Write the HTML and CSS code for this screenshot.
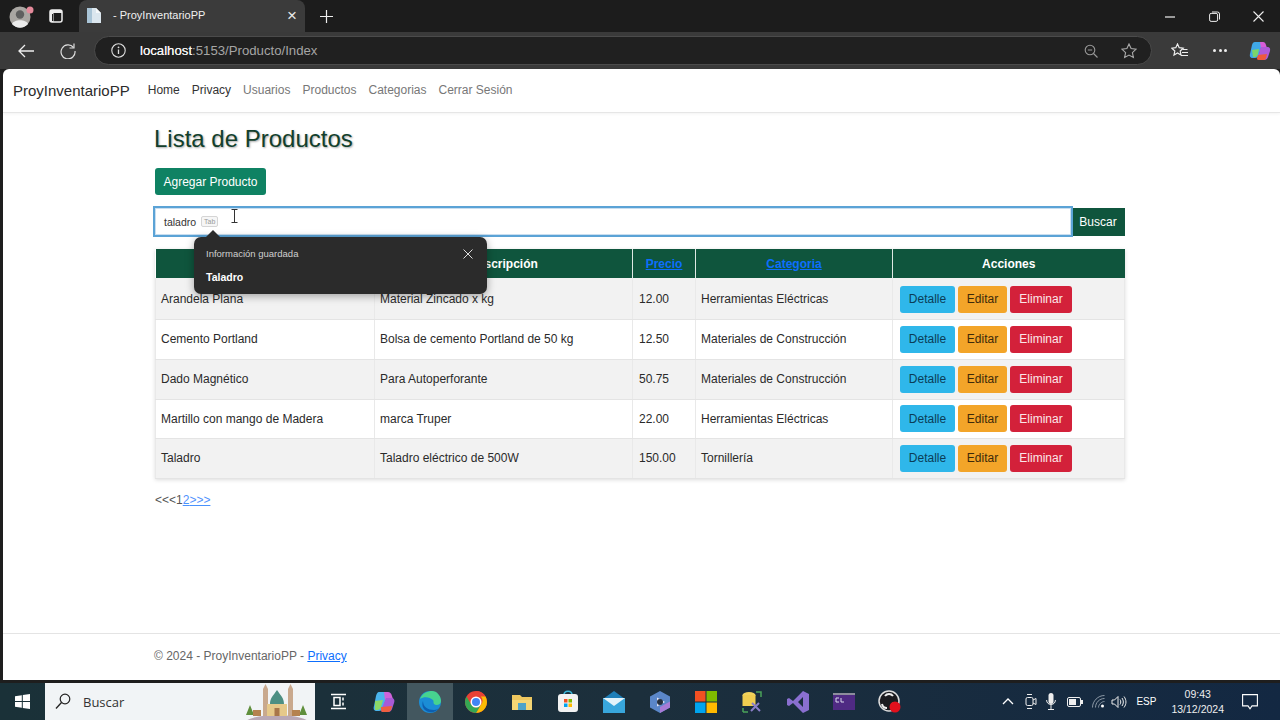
FILE: index.html
```html
<!DOCTYPE html>
<html lang="es">
<head>
<meta charset="utf-8">
<title>- ProyInventarioPP</title>
<link rel="stylesheet" href="styles.css">
</head>
<body>
<header class="tabbar">
  <div class="avatar">
    <svg width="26" height="26" viewBox="0 0 26 26"><circle cx="11" cy="14" r="10.5" fill="#a9a6a2"/><circle cx="11" cy="11.5" r="4.2" fill="#5f5f5f"/><path d="M3 21c2-5 14-5 16 0a10.500 10.500 0 0 1-16 0z" fill="#ececec"/><circle cx="21" cy="7" r="3.500" fill="#e58a9b"/></svg>
  </div>
  <svg class="tabs-icon" width="14" height="14" viewBox="0 0 14 14"><rect x="1" y="1" width="12" height="12" rx="2" fill="none" stroke="#eee" stroke-width="1.500"/><rect x="1" y="1" width="12" height="3" fill="#eee"/><rect x="1" y="1" width="3.500" height="12" fill="#eee"/><rect x="3" y="5" width="1" height="7" fill="#222"/></svg>
  <div class="tab">
    <svg width="16" height="17" viewBox="0 0 16 17"><path d="M1 1h9l5 5v10H1z" fill="#dbe6ee"/><path d="M1 1h5v15H1z" fill="#a9c4d6"/><path d="M10 1l5 5h-5z" fill="#f5f8fa"/></svg>
    <span class="tab-title">- ProyInventarioPP</span>
    <span class="tab-close">×</span>
  </div>
  <svg class="plus" width="13" height="13" viewBox="0 0 13 13"><path d="M6.500 0v13M0 6.500h13" stroke="#eee" stroke-width="1.200"/></svg>
  <div class="winctl">
    <svg width="11" height="11" viewBox="0 0 11 11"><path d="M0 6h10" stroke="#eee" stroke-width="1.200"/></svg>
    <svg width="11" height="11" viewBox="0 0 11 11"><rect x=".6" y="2.400" width="8" height="8" rx="1.500" fill="none" stroke="#eee"/><path d="M3 1h5.500a2 2 0 0 1 2 2v5.500" fill="none" stroke="#eee"/></svg>
    <svg width="11" height="11" viewBox="0 0 11 11"><path d="M.5.5l10 10M10.500.5l-10 10" stroke="#eee" stroke-width="1.100"/></svg>
  </div>
</header>

<nav class="toolbar">
  <svg class="tool-back" width="16" height="14" viewBox="0 0 16 14"><path d="M7 1L1 7l6 6M1 7h15" fill="none" stroke="#eee" stroke-width="1.300"/></svg>
  <svg class="tool-reload" width="16" height="16" viewBox="0 0 16 16"><path d="M13.500 4.500A7 7 0 1 0 15 8" fill="none" stroke="#ddd" stroke-width="1.200"/><path d="M14 0.500v4.500H9.500" fill="none" stroke="#ddd" stroke-width="1.200"/></svg>
  <div class="addressbar">
    <svg width="15" height="15" viewBox="0 0 15 15"><circle cx="7.500" cy="7.500" r="6.700" fill="none" stroke="#ddd" stroke-width="1.100"/><path d="M7.500 6.500v4.500" stroke="#ddd" stroke-width="1.300"/><circle cx="7.500" cy="4.300" r=".9" fill="#ddd"/></svg>
    <span class="url"><b>localhost</b>:5153/Producto/Index</span>
    <svg class="zoom-icon" width="14" height="14" viewBox="0 0 14 14"><circle cx="6" cy="6" r="4.800" fill="none" stroke="#999" stroke-width="1.100"/><path d="M3.800 6h4.400M9.500 9.500l4 4" stroke="#999" stroke-width="1.100"/></svg>
    <svg class="star-icon" width="16" height="16" viewBox="0 0 16 16"><path d="M8 1l2.100 4.600 5 .6-3.700 3.400 1 4.900L8 12.100l-4.400 2.400 1-4.900L.9 6.200l5-.6z" fill="none" stroke="#aaa" stroke-width="1.100"/></svg>
  </div>
  <svg class="favs" width="17" height="15" viewBox="0 0 17 15"><path d="M6.500 1l1.700 3.700 4 .5-3 2.800.8 4L6.500 10 3 12l.8-4-3-2.800 4-.5z" fill="none" stroke="#eee" stroke-width="1.200"/><path d="M11.500 6.500h5M11 9.500h6M10 12.500h7" stroke="#eee" stroke-width="1.100"/></svg>
  <span class="dots"><i></i><i></i><i></i></span>
  <svg class="copilot" width="22" height="22" viewBox="0 0 22 22"><path d="M6 2h5c2 0 2 2 1.500 4L10 15c-.5 2-2 3-4 3H4c-3 0-3.500-2-3-4L3 5c.5-2 1.500-3 3-3z" fill="#3fa9e8"/><path d="M11 2h3c1.500 0 2.500 1 3 3l1 3-6 1z" fill="#d85cd8"/><path d="M12 7h6c3 0 3.500 2 3 4l-2 6c-.6 2-2 3-4 3h-4c-2 0-2.500-1.500-2-3l1.500-5c.4-2 1-5 1.500-5z" fill="#b05ad9"/><path d="M9 15l9-1-1 4c-.5 1.500-1.500 2-3 2h-4c-2 0-2-1-2-2z" fill="#ee5a3c"/><path d="M3 10l7-1-1 5c-.4 2-2 3-3 3H4z" fill="#7bd56b"/></svg>
</nav>

<main class="page">
  <div class="navbar">
    <a class="brand">ProyInventarioPP</a>
    <a class="nav-dark">Home</a>
    <a class="nav-dark">Privacy</a>
    <a class="nav-grey">Usuarios</a>
    <a class="nav-grey">Productos</a>
    <a class="nav-grey">Categorias</a>
    <a class="nav-grey">Cerrar Sesión</a>
  </div>

  <section class="content">
    <h1 class="title">Lista de Productos</h1>
    <a class="btn add">Agregar Producto</a>
    <form class="search">
      <div class="search-input">
        <span class="typed">taladro</span><span class="tabkey">Tab</span>
        <svg class="ibeam" width="7" height="14" viewBox="0 0 7 14"><path d="M.5.500h6M.5 13.500h6M3.500.5v13" stroke="#333" fill="none"/></svg>
      </div>
      <button class="search-btn" type="button">Buscar</button>
    </form>

    <div class="table-wrap">
      <table class="products">
        <colgroup>
          <col class="c1"><col class="c2"><col class="c3"><col class="c4"><col class="c5">
        </colgroup>
        <thead>
          <tr><th></th><th>Descripción</th><th><a>Precio</a></th><th><a>Categoria</a></th><th>Acciones</th></tr>
        </thead>
        <tbody>
          <tr><td>Arandela Plana</td><td>Material Zincado x kg</td><td>12.00</td><td>Herramientas Eléctricas</td><td><div class="acts"><a class="btn info">Detalle</a><a class="btn warn">Editar</a><a class="btn danger">Eliminar</a></div></td></tr>
          <tr><td>Cemento Portland</td><td>Bolsa de cemento Portland de 50 kg</td><td>12.50</td><td>Materiales de Construcción</td><td><div class="acts"><a class="btn info">Detalle</a><a class="btn warn">Editar</a><a class="btn danger">Eliminar</a></div></td></tr>
          <tr><td>Dado Magnético</td><td>Para Autoperforante</td><td>50.75</td><td>Materiales de Construcción</td><td><div class="acts"><a class="btn info">Detalle</a><a class="btn warn">Editar</a><a class="btn danger">Eliminar</a></div></td></tr>
          <tr><td>Martillo con mango de Madera</td><td>marca Truper</td><td>22.00</td><td>Herramientas Eléctricas</td><td><div class="acts"><a class="btn info">Detalle</a><a class="btn warn">Editar</a><a class="btn danger">Eliminar</a></div></td></tr>
          <tr><td>Taladro</td><td>Taladro eléctrico de 500W</td><td>150.00</td><td>Tornillería</td><td><div class="acts"><a class="btn info">Detalle</a><a class="btn warn">Editar</a><a class="btn danger">Eliminar</a></div></td></tr>
        </tbody>
      </table>
      <aside class="popover">
        <span class="pop-arrow"></span>
        <div class="pop-head"><span>Información guardada</span>
          <svg width="10" height="10" viewBox="0 0 10 10"><path d="M.5.500l9 9M9.500.500l-9 9" stroke="#ddd"/></svg>
        </div>
        <div class="pop-item">Taladro</div>
      </aside>
    </div>

    <p class="pager">&lt;&lt;&lt;1<a>2</a><a>&gt;&gt;&gt;</a></p>
  </section>

  <footer class="foot">© 2024 - ProyInventarioPP - <a>Privacy</a></footer>
</main>

<footer class="taskbar">
  <svg class="win" width="15" height="15" viewBox="0 0 15 15"><path d="M0 2.200l6.800-1V7H0zM7.800 1l7.200-1v7H7.800zM0 8h6.800v5.800l-6.800-1zM7.800 8H15v7l-7.200-1z" fill="#fff"/></svg>
  <div class="tsearch">
    <svg width="16" height="17" viewBox="0 0 16 17"><circle cx="10" cy="6" r="4.800" fill="none" stroke="#222" stroke-width="1.200"/><path d="M6.500 9.500L1 15.500" stroke="#222" stroke-width="1.300"/></svg>
    <span>Buscar</span>
    <svg class="mosque" width="70" height="37" viewBox="0 0 70 37"><ellipse cx="33" cy="41" rx="33" ry="9" fill="#b9a8b5"/><path d="M19 33V6l2.500-5L24 6v27z" fill="#c9a98e"/><path d="M44 33V6l2.500-5L49 6v27z" fill="#c9a98e"/><rect x="23" y="21" width="20" height="12" fill="#e6c98a"/><path d="M26 21c0-6 3-8 7-14 4 6 7 8 7 14z" fill="#4d8f83"/><rect x="30.500" y="25" width="5" height="8" fill="#a8764a"/><path d="M2 32l4-10 4 10z" fill="#5f8f3c"/><path d="M55 32l4-10 4 10z" fill="#5f8f3c"/><rect x="9" y="27" width="8" height="6" fill="#b5824f"/><rect x="48" y="27" width="8" height="6" fill="#b5824f"/></svg>
  </div>
  <div class="apps">
    <span class="app"><svg width="17" height="17" viewBox="0 0 17 17"><path d="M1 1.500h15M1 15.500h15M4 4.500h6v8H4zM13 4.500v3M13 9.500v3" fill="none" stroke="#fff" stroke-width="1.500"/></svg></span>
    <span class="app"><svg width="24" height="24" viewBox="0 0 24 24"><path d="M7 2h6c2 0 3 2 2 4l-4 12c-.7 2-2 3-4 3H5c-3 0-4-2-3-5L4 6c.5-2 1.500-4 3-4z" fill="#4ab4ec"/><path d="M12 2h4c2 0 3 1 4 4l1 3-8 1z" fill="#cf62d9"/><path d="M14 8h5c3 0 4 2 3 5l-2 6c-.7 2-2 3-4 3h-5c-2 0-2-2-1.500-3z" fill="#a85ad6"/><path d="M9 17l11-1-1 4c-.5 1-2 2-3 2h-5c-2 0-2-2-2-3z" fill="#ef5f3f"/><path d="M3 11l8-1-2 7c-.5 2-2 3-4 3H3z" fill="#8cd867"/></svg></span>
    <span class="app active"><svg width="24" height="24" viewBox="0 0 24 24"><circle cx="12" cy="12" r="11" fill="#1b8dd6"/><path d="M2 9C4 3 10 1 14 1c5 0 9 5 9 10 0 4-5 5-7 3-1-1 0-3-1-4-3-3-9-4-13-1z" fill="#47d38f"/><path d="M11 22c-5-1-8-6-6-11 0 6 5 9 11 9 2 0 4-1 5-2-2 3-6 5-10 4z" fill="#0d5fb0"/></svg></span>
    <span class="app"><svg width="24" height="24" viewBox="0 0 24 24"><circle cx="12" cy="12" r="11" fill="#e94235"/><path d="M12 1a11 11 0 0 1 9.500 5.500H12z" fill="#e94235"/><path d="M21.500 6.500A11 11 0 0 1 12 23l5-8.500a5.500 5.500 0 0 0-.3-8z" fill="#fbbc04"/><path d="M2.500 6.500L7.500 15a5.500 5.500 0 0 0 9.500-.5l-5 8.500A11 11 0 0 1 2.500 6.500z" fill="#34a853"/><circle cx="12" cy="12" r="5.500" fill="#fff"/><circle cx="12" cy="12" r="4" fill="#4285f4"/></svg></span>
    <span class="app"><svg width="22" height="18" viewBox="0 0 22 18"><path d="M1 2h8l2 2h10v13H1z" fill="#edc75f"/><path d="M1 7h20v10H1z" fill="#f4d675"/><rect x="7" y="10" width="8" height="7" fill="#4ea3c9"/></svg></span>
    <span class="app"><svg width="22" height="23" viewBox="0 0 22 23"><path d="M7 5c0-5 8-5 8 0" fill="none" stroke="#3bb6d8" stroke-width="1.500"/><rect x="1" y="4" width="20" height="18" rx="3" fill="#f2f2f2"/><rect x="7" y="9" width="3.500" height="3.500" fill="#f25022"/><rect x="11.500" y="9" width="3.500" height="3.500" fill="#7fba00"/><rect x="7" y="13.500" width="3.500" height="3.500" fill="#00a4ef"/><rect x="11.500" y="13.500" width="3.500" height="3.500" fill="#ffb900"/></svg></span>
    <span class="app"><svg width="24" height="22" viewBox="0 0 24 22"><path d="M12 0l11 8H1z" fill="#1f7fb8"/><rect x="1" y="7" width="22" height="15" fill="#38a6dc"/><path d="M1 7l11 8 11-8z" fill="#e4f3fa"/></svg></span>
    <span class="app"><svg width="22" height="22" viewBox="0 0 22 22"><path d="M11 0l10 5.500v11L11 22 1 16.500v-11z" fill="#5b87c9"/><path d="M11 22l10-5.500v-6L11 16z" fill="#a87bd6"/><path d="M8 6.500l8 4.500-8 4.500z" fill="#e6e6f5"/><circle cx="11" cy="11" r="3" fill="#26303e"/></svg></span>
    <span class="app"><svg width="22" height="22" viewBox="0 0 22 22"><rect width="10.500" height="10.500" fill="#f25022"/><rect x="11.500" width="10.500" height="10.500" fill="#7fba00"/><rect y="11.500" width="10.500" height="10.500" fill="#00a4ef"/><rect x="11.500" y="11.500" width="10.500" height="10.500" fill="#ffb900"/></svg></span>
    <span class="app"><svg width="22" height="22" viewBox="0 0 22 22"><ellipse cx="8" cy="4" rx="6.500" ry="3" fill="#f2d25c"/><rect x="1.500" y="4" width="13" height="11" fill="#f0cd50"/><path d="M15 1h5v5M2 21v-4M2 21h5" fill="none" stroke="#4ba35a" stroke-width="1.500"/><path d="M10 20l8-8M11 12l8 8" stroke="#8a7fc9" stroke-width="2"/></svg></span>
    <span class="app"><svg width="24" height="24" viewBox="0 0 24 24"><path d="M17 1l6 3v16l-6 3L7 13l-4 3-2-1V9l2-1 4 3zm0 6l-5 5 5 5z" fill="#8a6fd0"/></svg></span>
    <span class="app"><svg width="22" height="17" viewBox="0 0 22 17"><rect width="22" height="17" fill="#4f2a83"/><rect width="22" height="2" fill="#8d8d9c"/><path d="M3 5h3M3 5v4h3M8 5v4h3" stroke="#d8d8ea" fill="none"/></svg></span>
    <span class="app"><svg width="24" height="24" viewBox="0 0 24 24"><circle cx="11" cy="11" r="10" fill="#1b1b1f" stroke="#ddd" stroke-width="1.500"/><path d="M7 6a5 5 0 0 1 8 0M4 14a5 5 0 0 0 5 4M13 17l2-4" stroke="#eee" stroke-width="2" fill="none"/><circle cx="17" cy="17" r="5.500" fill="#e3101c"/></svg></span>
  </div>
  <div class="tray">
    <svg class="chev" width="12" height="7" viewBox="0 0 12 7"><path d="M1 6l5-5 5 5" fill="none" stroke="#fff" stroke-width="1.300"/></svg>
    <svg class="cam" width="12" height="17" viewBox="0 0 12 17"><rect x="1" y="4.500" width="7" height="8" rx="1.500" fill="none" stroke="#eee"/><path d="M8 7l3-1.500v6L8 10M2 1.500h5M2 15.500h5" fill="none" stroke="#eee"/></svg>
    <svg class="mic" width="10" height="17" viewBox="0 0 10 17"><rect x="2.500" y="0" width="5" height="11" rx="2.500" fill="#eee"/><path d="M.6 7c0 6 8.800 6 8.800 0M5 12v4M2 16.500h6" stroke="#eee" fill="none"/></svg>
    <svg class="bat" width="16" height="10" viewBox="0 0 16 10"><rect x=".5" y=".5" width="13" height="9" rx="1.500" fill="none" stroke="#eee"/><rect x="2" y="2" width="7" height="6" fill="#eee"/><rect x="14" y="3" width="2" height="4" fill="#eee"/></svg>
    <svg width="13" height="13" viewBox="0 0 13 13"><path d="M.5 12.500C.5 6 6 .5 12.500.5M3.500 12.500c0-5 4-9 9-9M6.500 12.500c0-3 3-6 6-6" fill="none" stroke="#8b98a5"/><circle cx="10.500" cy="11" r="1.500" fill="#fff"/></svg>
    <svg class="vol" width="16" height="14" viewBox="0 0 16 14"><path d="M1 5h2.500L7 1.500v11L3.500 9H1z" fill="none" stroke="#eee"/><path d="M9 4.500c1 1.500 1 3.500 0 5M11 3c1.800 2.500 1.800 5.500 0 8M13 1.500c2.600 3.500 2.600 7.500 0 11" fill="none" stroke="#eee"/></svg>
    <span class="lang">ESP</span>
    <div class="clock"><span>09:43</span><span>13/12/2024</span></div>
    <svg class="notif" width="16" height="16" viewBox="0 0 16 16"><path d="M.6.600h14.800v11.300H10L8 14.800 6 11.900H.6z" fill="none" stroke="#fff" stroke-width="1.100"/></svg>
  </div>
</footer>
</body>
</html>
```

FILE: styles.css
```css
* { box-sizing: border-box; }
html, body { margin: 0; height: 720px; overflow: hidden; }
body {
  display: flex;
  flex-direction: column;
  background: #1e1e1e;
  font-family: "Liberation Sans", Arial, sans-serif;
  font-size: 12px;
  color: #212529;
}

/* Browser tab strip */
.tabbar {
  flex: 0 0 32px;
  display: flex;
  align-items: center;
  background: #1c1c1c;
}
.avatar { margin: 0 0 0 9px; width: 26px; height: 26px; }
.tabs-icon { margin-left: 14px; }
.tab {
  margin: 0 0 0 16px;
  align-self: flex-end;
  width: 226px;
  height: 32px;
  padding: 0 0 2px 7px;
  display: flex;
  align-items: center;
  background: #3b3b3b;
  border-radius: 8px 8px 0 0;
  color: #f0f0f0;
}
.tab-title { margin-left: 11px; font-size: 11px; flex: 1; }
.tab-close { font-size: 17px; margin-right: 8px; line-height: 1; color: #e8e8e8; }
.plus { margin-left: 15px; }
.winctl {
  margin-left: auto;
  display: flex;
  gap: 33px;
  padding-right: 16px;
}

/* Browser toolbar */
.toolbar {
  flex: 0 0 37px;
  display: flex;
  align-items: center;
  background: #3a3a3a;
  padding-left: 18px;
}
.tool-reload { margin-left: 26px; }
.addressbar {
  margin-left: 18px;
  width: 1058px;
  height: 29px;
  display: flex;
  align-items: center;
  padding-left: 16px;
  background: #202020;
  border: 1px solid #4b4b4b;
  border-radius: 15px;
}
.url { margin-left: 14px; font-size: 13.200px; color: #a5a5a5; }
.url b { color: #f2f2f2; font-weight: 400; text-shadow: 0 0 .6px #f2f2f2; }
.zoom-icon { margin-left: auto; }
.star-icon { margin: 0 14px 0 23px; }
.favs { margin-left: 19px; }
.dots { margin-left: 25px; display: flex; gap: 2.500px; }
.dots i { width: 3px; height: 3px; background: #eee; border-radius: 50%; }
.copilot { margin-left: 22px; }

/* Page */
.page {
  flex: 0 0 611px;
  margin: 0 0 3px 3px;
  width: 1277px;
  display: flex;
  flex-direction: column;
  background: #fff;
  border-radius: 6px 6px 0 0;
}
.navbar {
  flex: 0 0 44px;
  display: flex;
  align-items: center;
  padding: 0 0 1px 10px;
  border-bottom: 1px solid #e6e6e6;
  box-shadow: 0 1px 3px rgba(0,0,0,.05);
}
.brand { font-size: 15px; margin-right: 18px; color: #2b2b2b; }
.navbar a { white-space: nowrap; }
.nav-dark { color: #333; margin-right: 12px; }
.nav-grey { color: #777; margin-right: 12px; }

.content {
  flex: 1;
  padding: 0 0 0 151px;
  width: 1122px;
  display: flex;
  flex-direction: column;
  align-items: flex-start;
}
.title {
  margin: 12px 0 0;
  font-size: 24px;
  font-weight: 400;
  line-height: 28px;
  color: #123f2c;
  text-shadow: 1px 1px 2px rgba(0,0,0,.35);
}
.btn {
  display: inline-flex;
  align-items: center;
  justify-content: center;
  font-size: 12px;
  border-radius: 3px;
  white-space: nowrap;
}
.add {
  margin: 15px 0 0 1px;
  width: 111px;
  height: 27px;
  background: #0f8263;
  color: #fff;
}
.search {
  margin: 11px 0 0 -1px;
  width: 972px;
  display: flex;
  align-items: center;
}
.search-input {
  width: 920px;
  height: 31px;
  display: flex;
  align-items: center;
  padding-left: 9px;
  gap: 5px;
  background: #fff;
  border: 2px solid #5ba3d6;
  outline: 1px solid #c9def0;
  outline-offset: -3px;
}
.typed { font-size: 10.500px; color: #333; }
.tabkey {
  font-size: 7px;
  color: #999;
  border: 1px solid #d5d5d5;
  border-radius: 2px;
  padding: 1px 2px;
  background: #f6f6f6;
}
.ibeam { margin: -12px 0 0 8px; }
.search-btn {
  width: 52px;
  height: 28px;
  padding: 0 2px 0 0;
  border: 0;
  background: #0f553d;
  color: #fff;
  font: 12px "Liberation Sans", Arial, sans-serif;
}

/* Table */
.table-wrap {
  position: relative;
  margin-top: 12px;
  margin-left: 1px;
  box-shadow: 0 1px 4px rgba(0,0,0,.14);
}
.products {
  width: 969px;
  table-layout: fixed;
  border-collapse: collapse;
}
.c1 { width: 219px; }
.c2 { width: 258px; }
.c3 { width: 63px; }
.c4 { width: 197px; }
.c5 { width: 232px; }
.products th {
  height: 29px;
  padding: 0;
  background: #0f553d;
  color: #fff;
  font-size: 12px;
  font-weight: 700;
  border-left: 1px solid #dfe8e4;
}
.products th:first-child { border-left: 0; }
.products th a { color: #0d6efd; text-decoration: underline; }
.products td {
  height: 40px;
  padding: 0 5px;
  color: #2a2a2a;
  border: 1px solid #e9e9e9;
  border-top: 0;
  border-bottom: 1px solid #e4e4e4;
}
.products td:nth-child(3), .products td:nth-child(5) { padding-left: 6px; }
.products tbody tr:nth-child(1) td { height: 41px; padding-top: 2px; }
.products tbody tr:nth-child(4) td { height: 39px; }
.products tbody tr:nth-child(odd) td { background: #f2f2f2; }
.acts { display: flex; gap: 3px; margin-left: 1px; }
.acts .btn { height: 27px; }
.info { width: 55px; background: #2fb7ea; color: #0b3d57; }
.warn { width: 49px; background: #f3a529; color: #3d2a0a; }
.danger { width: 62px; background: #d3213a; color: #fbe6e8; }

.popover {
  position: absolute;
  left: 39px;
  top: -12px;
  width: 293px;
  height: 57px;
  padding: 11px 14px 0 12px;
  background: #2b2b2b;
  border-radius: 7px;
  box-shadow: 0 2px 8px rgba(0,0,0,.35);
  color: #fff;
}
.pop-arrow {
  position: absolute;
  left: 12px;
  top: -7px;
  border-left: 7px solid transparent;
  border-right: 7px solid transparent;
  border-bottom: 7px solid #2b2b2b;
}
.pop-head {
  display: flex;
  align-items: center;
  justify-content: space-between;
  font-size: 9.500px;
  color: #cfcfcf;
}
.pop-item { margin-top: 12px; font-size: 10.500px; font-weight: 700; }

.pager { margin: 14px 0 0 1px; line-height: 14px; color: #555; }
.pager a { color: #0d6efd; text-decoration: underline; opacity: .75; }

.foot {
  flex: 0 0 47px;
  display: flex;
  align-items: center;
  padding: 0 0 2px 151px;
  border-top: 1px solid #e4e4e4;
  color: #666;
  white-space: pre-wrap;
}
.foot a { color: #0d6efd; text-decoration: underline; }

/* Windows taskbar */
.taskbar {
  flex: 0 0 37px;
  display: flex;
  align-items: center;
  background: linear-gradient(90deg, #1a3138 0%, #1c2f3c 50%, #132842 100%);
  color: #fff;
}
.win { margin-left: 15px; }
.tsearch {
  margin-left: 15px;
  width: 270px;
  height: 37px;
  display: flex;
  align-items: center;
  padding-left: 10px;
  background: #f1f4f6;
  overflow: hidden;
  color: #333;
  font-family: "Open Sans", sans-serif;
  font-size: 13px;
}
.tsearch span { margin-left: 12px; }
.mosque { margin-left: auto; margin-right: 1px; }
.apps { margin-left: 0; display: flex; }
.app {
  width: 46px;
  height: 37px;
  display: flex;
  align-items: center;
  justify-content: center;
}
.active { background: #43575f; }
.tray {
  margin-left: auto;
  display: flex;
  align-items: center;
  gap: 9px;
  padding-right: 22px;
}
.chev { margin-right: 2px; }
.mic { margin-right: 2px; }
.vol { margin-left: -3px; }
.lang { font-size: 10px; }
.clock {
  display: flex;
  flex-direction: column;
  align-items: center;
  gap: 3px;
  margin-left: 6px;
  font-size: 10.500px;
  color: #eee;
}
.notif { margin-left: 9px; }
```
